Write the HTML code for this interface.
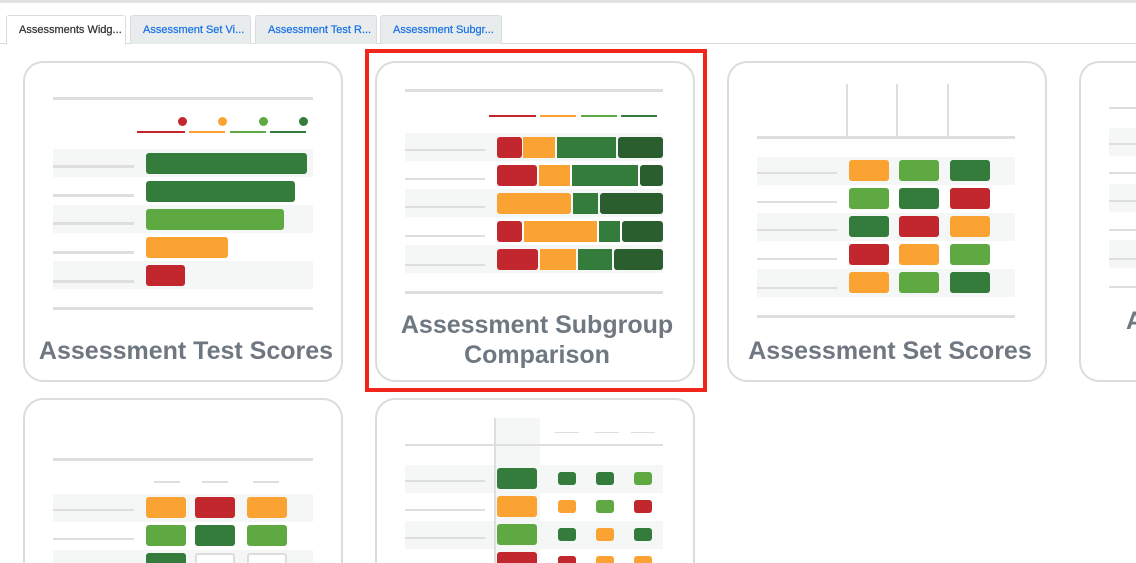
<!DOCTYPE html>
<html style="width:1136px;height:563px;overflow:hidden"><head><meta charset="utf-8"><style>
*{margin:0;padding:0;box-sizing:border-box}
body{width:1136px;height:563px;overflow:hidden;background:#fff;font-family:"Liberation Sans",sans-serif}
#w{position:relative;width:1136px;height:563px;overflow:hidden}
#w div{position:absolute}
.l{height:3px;background:#dedede}
.s{background:#f5f6f6}
.b{border-radius:3px}
.R{background:#c1272d}.O{background:#faa332}.G{background:#5fa942}.D{background:#347c3b}.K{background:#2a5e2f}
.card{border:2px solid #dcdcdc;border-radius:20px;background:#fff;width:320px;height:321px}
.card2{border:2px solid #dcdcdc;border-bottom:none;border-radius:20px 20px 0 0;background:#fff;width:320px;height:165px}
.t{color:#6f7780;font-weight:bold;font-size:25px;text-align:center;white-space:nowrap}
.tab{top:15px;height:29px;border:1px solid #d9dddf;border-bottom:none;border-radius:3px 3px 0 0;background:#e9eced;font-size:11px;color:#1a73e8;line-height:29px;padding-left:12px;white-space:nowrap;overflow:hidden;-webkit-text-stroke:0.25px currentColor}
</style></head><body><div id="w">
<div style="left:0;top:0;width:1136px;height:3px;background:#e2e2e2"></div>
<div style="left:0;top:43px;width:1136px;height:1px;background:#d9dddf"></div>
<div class="tab" style="left:6px;width:120px;background:#fff;color:#333;height:30px">Assessments Widg...</div>
<div class="tab" style="left:130px;width:121px">Assessment Set Vi...</div>
<div class="tab" style="left:255px;width:122px">Assessment Test R...</div>
<div class="tab" style="left:380px;width:122px">Assessment Subgr...</div>

<!-- card1 -->
<div class="card" style="left:23px;top:61px"></div>
<div class="l" style="left:53px;top:97px;width:260px"></div>
<div style="left:178px;top:117px;width:9px;height:9px;border-radius:50%" class="R"></div>
<div style="left:218px;top:117px;width:9px;height:9px;border-radius:50%" class="O"></div>
<div style="left:259px;top:117px;width:9px;height:9px;border-radius:50%" class="G"></div>
<div style="left:299px;top:117px;width:9px;height:9px;border-radius:50%" class="D"></div>
<div class="R" style="left:137px;top:131px;width:48px;height:2px"></div>
<div class="O" style="left:189px;top:131px;width:36px;height:2px"></div>
<div class="G" style="left:230px;top:131px;width:36px;height:2px"></div>
<div class="D" style="left:270px;top:131px;width:36px;height:2px"></div>
<div class="s" style="left:53px;top:149px;width:260px;height:28px"></div>
<div class="s" style="left:53px;top:205px;width:260px;height:28px"></div>
<div class="s" style="left:53px;top:261px;width:260px;height:28px"></div>
<div class="l" style="left:53px;top:165px;width:81px"></div>
<div class="l" style="left:53px;top:194px;width:81px"></div>
<div class="l" style="left:53px;top:222px;width:81px"></div>
<div class="l" style="left:53px;top:251px;width:81px"></div>
<div class="l" style="left:53px;top:280px;width:81px"></div>
<div class="b D" style="left:146px;top:153px;width:161px;height:21px"></div>
<div class="b D" style="left:146px;top:181px;width:149px;height:21px"></div>
<div class="b G" style="left:146px;top:209px;width:138px;height:21px"></div>
<div class="b O" style="left:146px;top:237px;width:82px;height:21px"></div>
<div class="b R" style="left:146px;top:265px;width:39px;height:21px"></div>
<div class="l" style="left:53px;top:307px;width:260px"></div>
<div class="t" style="left:26px;top:337px;width:320px">Assessment Test Scores</div>

<!-- card2 -->
<div class="card" style="left:375px;top:61px"></div>
<div class="l" style="left:405px;top:89px;width:258px"></div>
<div class="R" style="left:489px;top:115px;width:47px;height:2px"></div>
<div class="O" style="left:540px;top:115px;width:36px;height:2px"></div>
<div class="G" style="left:581px;top:115px;width:36px;height:2px"></div>
<div class="D" style="left:621px;top:115px;width:36px;height:2px"></div>
<div class="s" style="left:405px;top:133px;width:258px;height:28px"></div>
<div class="s" style="left:405px;top:189px;width:258px;height:28px"></div>
<div class="s" style="left:405px;top:245px;width:258px;height:28px"></div>
<div class="l" style="left:405px;top:149px;width:80px;height:2px"></div>
<div class="l" style="left:405px;top:178px;width:80px;height:2px"></div>
<div class="l" style="left:405px;top:206px;width:80px;height:2px"></div>
<div class="l" style="left:405px;top:235px;width:80px;height:2px"></div>
<div class="l" style="left:405px;top:264px;width:80px;height:2px"></div>
<div class="b R" style="left:497px;top:137px;width:25px;height:21px"></div><div class="O" style="left:523px;top:137px;width:32px;height:21px"></div><div class="D" style="left:557px;top:137px;width:59px;height:21px"></div><div class="b K" style="left:618px;top:137px;width:45px;height:21px"></div>
<div class="b R" style="left:497px;top:165px;width:40px;height:21px"></div><div class="O" style="left:539px;top:165px;width:31px;height:21px"></div><div class="D" style="left:572px;top:165px;width:66px;height:21px"></div><div class="b K" style="left:640px;top:165px;width:23px;height:21px"></div>
<div class="b O" style="left:497px;top:193px;width:74px;height:21px"></div><div class="D" style="left:573px;top:193px;width:25px;height:21px"></div><div class="b K" style="left:600px;top:193px;width:63px;height:21px"></div>
<div class="b R" style="left:497px;top:221px;width:25px;height:21px"></div><div class="O" style="left:524px;top:221px;width:73px;height:21px"></div><div class="D" style="left:599px;top:221px;width:21px;height:21px"></div><div class="b K" style="left:622px;top:221px;width:41px;height:21px"></div>
<div class="b R" style="left:497px;top:249px;width:41px;height:21px"></div><div class="O" style="left:540px;top:249px;width:36px;height:21px"></div><div class="D" style="left:578px;top:249px;width:34px;height:21px"></div><div class="b K" style="left:614px;top:249px;width:49px;height:21px"></div>
<div class="l" style="left:405px;top:291px;width:258px"></div>
<div class="t" style="left:377px;top:310px;width:320px;line-height:30px">Assessment Subgroup<br>Comparison</div>

<!-- card3 -->
<div class="card" style="left:727px;top:61px"></div>
<div style="left:846px;top:84px;width:2px;height:53px;background:#dedede"></div>
<div style="left:896px;top:84px;width:2px;height:53px;background:#dedede"></div>
<div style="left:947px;top:84px;width:2px;height:53px;background:#dedede"></div>
<div class="l" style="left:757px;top:136px;width:258px"></div>
<div class="s" style="left:757px;top:157px;width:258px;height:28px"></div>
<div class="s" style="left:757px;top:213px;width:258px;height:28px"></div>
<div class="s" style="left:757px;top:269px;width:258px;height:28px"></div>
<div class="l" style="left:757px;top:172px;width:80px;height:2px"></div>
<div class="l" style="left:757px;top:201px;width:80px;height:2px"></div>
<div class="l" style="left:757px;top:229px;width:80px;height:2px"></div>
<div class="l" style="left:757px;top:258px;width:80px;height:2px"></div>
<div class="l" style="left:757px;top:287px;width:80px;height:2px"></div>
<div class="b O" style="left:849px;top:160px;width:40px;height:21px"></div><div class="b G" style="left:899px;top:160px;width:40px;height:21px"></div><div class="b D" style="left:950px;top:160px;width:40px;height:21px"></div>
<div class="b G" style="left:849px;top:188px;width:40px;height:21px"></div><div class="b D" style="left:899px;top:188px;width:40px;height:21px"></div><div class="b R" style="left:950px;top:188px;width:40px;height:21px"></div>
<div class="b D" style="left:849px;top:216px;width:40px;height:21px"></div><div class="b R" style="left:899px;top:216px;width:40px;height:21px"></div><div class="b O" style="left:950px;top:216px;width:40px;height:21px"></div>
<div class="b R" style="left:849px;top:244px;width:40px;height:21px"></div><div class="b O" style="left:899px;top:244px;width:40px;height:21px"></div><div class="b G" style="left:950px;top:244px;width:40px;height:21px"></div>
<div class="b O" style="left:849px;top:272px;width:40px;height:21px"></div><div class="b G" style="left:899px;top:272px;width:40px;height:21px"></div><div class="b D" style="left:950px;top:272px;width:40px;height:21px"></div>
<div class="l" style="left:757px;top:315px;width:258px"></div>
<div class="t" style="left:730px;top:337px;width:320px">Assessment Set Scores</div>

<!-- card4 -->
<div class="card" style="left:1079px;top:61px;width:57px;border-right:none;border-radius:20px 0 0 20px"></div>
<div class="s" style="left:1109px;top:128px;width:27px;height:28px"></div>
<div class="s" style="left:1109px;top:184px;width:27px;height:28px"></div>
<div class="s" style="left:1109px;top:240px;width:27px;height:28px"></div>
<div class="l" style="left:1109px;top:107px;width:27px;height:2px"></div>
<div class="l" style="left:1109px;top:143px;width:27px;height:2px"></div>
<div class="l" style="left:1109px;top:172px;width:27px;height:2px"></div>
<div class="l" style="left:1109px;top:200px;width:27px;height:2px"></div>
<div class="l" style="left:1109px;top:229px;width:27px;height:2px"></div>
<div class="l" style="left:1109px;top:258px;width:27px;height:2px"></div>
<div class="l" style="left:1109px;top:286px;width:27px;height:2px"></div>
<div class="t" style="left:1126px;top:307px">A</div>

<!-- row2 card1 -->
<div class="card2" style="left:23px;top:398px"></div>
<div class="l" style="left:53px;top:458px;width:260px"></div>
<div class="l" style="left:154px;top:481px;width:26px;height:2px"></div>
<div class="l" style="left:202px;top:481px;width:26px;height:2px"></div>
<div class="l" style="left:253px;top:481px;width:26px;height:2px"></div>
<div class="s" style="left:53px;top:494px;width:260px;height:28px"></div>
<div class="s" style="left:53px;top:550px;width:260px;height:13px"></div>
<div class="l" style="left:53px;top:509px;width:81px;height:2px"></div>
<div class="l" style="left:53px;top:538px;width:81px;height:2px"></div>
<div class="b O" style="left:146px;top:497px;width:40px;height:21px"></div><div class="b R" style="left:195px;top:497px;width:40px;height:21px"></div><div class="b O" style="left:247px;top:497px;width:40px;height:21px"></div>
<div class="b G" style="left:146px;top:525px;width:40px;height:21px"></div><div class="b D" style="left:195px;top:525px;width:40px;height:21px"></div><div class="b G" style="left:247px;top:525px;width:40px;height:21px"></div>
<div class="D" style="left:146px;top:553px;width:40px;height:10px;border-radius:3px 3px 0 0"></div><div style="left:195px;top:553px;width:40px;height:10px;border:2px solid #ddd;border-bottom:none;border-radius:3px 3px 0 0;background:#fff"></div><div style="left:247px;top:553px;width:40px;height:10px;border:2px solid #ddd;border-bottom:none;border-radius:3px 3px 0 0;background:#fff"></div>

<!-- row2 card2 -->
<div class="card2" style="left:375px;top:398px"></div>
<div class="s" style="left:494px;top:418px;width:46px;height:145px"></div>
<div class="s" style="left:405px;top:465px;width:258px;height:28px"></div>
<div class="s" style="left:405px;top:521px;width:258px;height:28px"></div>
<div style="left:494px;top:418px;width:2px;height:145px;background:#dedede"></div>
<div class="l" style="left:405px;top:444px;width:258px;height:2px"></div>
<div class="l" style="left:555px;top:432px;width:24px;height:1px"></div>
<div class="l" style="left:595px;top:432px;width:24px;height:1px"></div>
<div class="l" style="left:631px;top:432px;width:24px;height:1px"></div>
<div class="l" style="left:405px;top:480px;width:80px;height:2px"></div>
<div class="l" style="left:405px;top:509px;width:80px;height:2px"></div>
<div class="l" style="left:405px;top:537px;width:80px;height:2px"></div>
<div class="b D" style="left:497px;top:468px;width:40px;height:21px"></div><div class="b D" style="left:558px;top:472px;width:18px;height:13px"></div><div class="b D" style="left:596px;top:472px;width:18px;height:13px"></div><div class="b G" style="left:634px;top:472px;width:18px;height:13px"></div>
<div class="b O" style="left:497px;top:496px;width:40px;height:21px"></div><div class="b O" style="left:558px;top:500px;width:18px;height:13px"></div><div class="b G" style="left:596px;top:500px;width:18px;height:13px"></div><div class="b R" style="left:634px;top:500px;width:18px;height:13px"></div>
<div class="b G" style="left:497px;top:524px;width:40px;height:21px"></div><div class="b D" style="left:558px;top:528px;width:18px;height:13px"></div><div class="b O" style="left:596px;top:528px;width:18px;height:13px"></div><div class="b D" style="left:634px;top:528px;width:18px;height:13px"></div>
<div class="R" style="left:497px;top:552px;width:40px;height:11px;border-radius:3px 3px 0 0"></div><div class="R" style="left:558px;top:556px;width:18px;height:7px;border-radius:3px 3px 0 0"></div><div class="O" style="left:596px;top:556px;width:18px;height:7px;border-radius:3px 3px 0 0"></div><div class="O" style="left:634px;top:556px;width:18px;height:7px;border-radius:3px 3px 0 0"></div>

<!-- highlight -->
<div style="left:365px;top:49px;width:342px;height:343px;border:4px solid #f0261b"></div>
</div></body></html>
